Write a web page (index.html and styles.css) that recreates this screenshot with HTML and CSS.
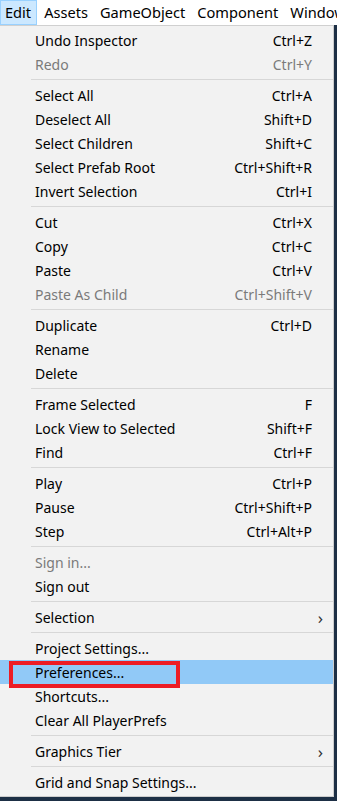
FILE: index.html
```html
<!DOCTYPE html>
<html lang="en">
<head>
<meta charset="UTF-8">
<meta name="viewport" content="width=device-width, initial-scale=1.0">
<title>Edit menu</title>
<link rel="stylesheet" href="styles.css">
</head>
<body>
<div class="menubar">
  <span class="menubar-item open">Edit</span>
  <span class="menubar-item">Assets</span>
  <span class="menubar-item">GameObject</span>
  <span class="menubar-item">Component</span>
  <span class="menubar-item">Window</span>
</div>

<div class="menu">
  <div class="item"><span>Undo Inspector</span><span class="key">Ctrl+Z</span></div>
  <div class="item disabled"><span>Redo</span><span class="key">Ctrl+Y</span></div>
  <div class="sep"></div>

  <div class="item"><span>Select All</span><span class="key">Ctrl+A</span></div>
  <div class="item"><span>Deselect All</span><span class="key">Shift+D</span></div>
  <div class="item"><span>Select Children</span><span class="key">Shift+C</span></div>
  <div class="item"><span>Select Prefab Root</span><span class="key">Ctrl+Shift+R</span></div>
  <div class="item"><span>Invert Selection</span><span class="key">Ctrl+I</span></div>
  <div class="sep"></div>

  <div class="item"><span>Cut</span><span class="key">Ctrl+X</span></div>
  <div class="item"><span>Copy</span><span class="key">Ctrl+C</span></div>
  <div class="item"><span>Paste</span><span class="key">Ctrl+V</span></div>
  <div class="item disabled"><span>Paste As Child</span><span class="key">Ctrl+Shift+V</span></div>
  <div class="sep"></div>

  <div class="item"><span>Duplicate</span><span class="key">Ctrl+D</span></div>
  <div class="item"><span>Rename</span></div>
  <div class="item"><span>Delete</span></div>
  <div class="sep"></div>

  <div class="item"><span>Frame Selected</span><span class="key">F</span></div>
  <div class="item"><span>Lock View to Selected</span><span class="key">Shift+F</span></div>
  <div class="item"><span>Find</span><span class="key">Ctrl+F</span></div>
  <div class="sep"></div>

  <div class="item"><span>Play</span><span class="key">Ctrl+P</span></div>
  <div class="item"><span>Pause</span><span class="key">Ctrl+Shift+P</span></div>
  <div class="item"><span>Step</span><span class="key">Ctrl+Alt+P</span></div>
  <div class="sep"></div>

  <div class="item disabled"><span>Sign in...</span></div>
  <div class="item"><span>Sign out</span></div>
  <div class="sep"></div>

  <div class="item"><span>Selection</span><span class="arrow">&#x203A;</span></div>
  <div class="sep"></div>

  <div class="item"><span>Project Settings...</span></div>
  <div class="item active"><span>Preferences...</span><span class="mark"></span></div>
  <div class="item"><span>Shortcuts...</span></div>
  <div class="item"><span>Clear All PlayerPrefs</span></div>
  <div class="sep"></div>

  <div class="item"><span>Graphics Tier</span><span class="arrow">&#x203A;</span></div>
  <div class="sep"></div>

  <div class="item"><span>Grid and Snap Settings...</span></div>
</div>
</body>
</html>
```

FILE: styles.css
```css
body {
  margin: 0;
  font-family: "Noto Sans", "Open Sans", sans-serif;
  font-size: 14px;
  color: #000;
  background-color: #1d2f45;
  height: 801px;
  overflow: hidden;
}
.menubar {
  display: flex;
  height: 25px;
  background-color: #fff;
  overflow: hidden;
  font-size: 14.6px;
}
.menubar-item {
  box-sizing: border-box;
  height: 25px;
  line-height: 23px;
  padding: 0 5px;
  border: 1px solid transparent;
  white-space: nowrap;
}
.menubar-item.open {
  background-color: #cce8ff;
  border-color: #99d1ff;
  padding: 0 5px 0 4px;
  margin-right: 1px;
}
.menu {
  width: 333px;
  background-color: #f2f2f2;
  border-top: 1px solid #d0d0d0;
  border-right: 1px solid #cccccc;
  border-bottom: 1px solid #cccccc;
  padding: 2px 0 2px 0;
}
.item {
  display: flex;
  justify-content: space-between;
  align-items: center;
  height: 24px;
  padding: 0 21px 0 35px;
  white-space: nowrap;
}
.item.disabled {
  color: #7a7a7a;
}
.item.active {
  position: relative;
  background-color: #91c9f7;
}
.arrow {
  font-size: 17px;
  color: #333;
  margin-right: -11px;
}
.mark {
  position: absolute;
  left: 9px;
  top: 1px;
  width: 163px;
  height: 19px;
  border: 4px solid #ed1c24;
}
.sep {
  height: 1px;
  margin: 3px 0 3px 31px;
  background-color: #d7d7d7;
}
```
